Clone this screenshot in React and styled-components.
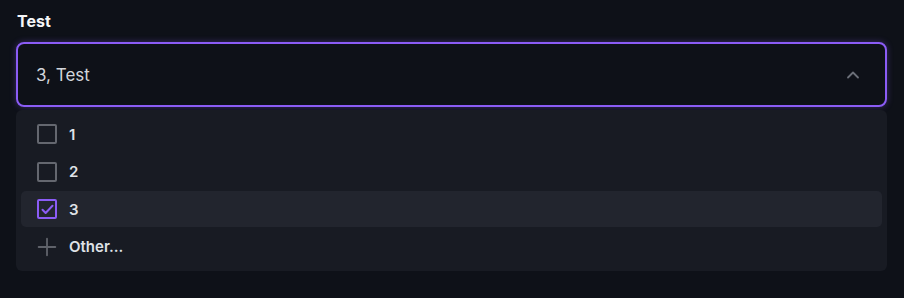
import React from 'react';
import styled, { createGlobalStyle } from 'styled-components';

const GlobalStyle = createGlobalStyle`
  html, body {
    margin: 0;
    background: #0e1118;
    font-family: Inter, "Noto Sans", sans-serif;
  }
`;

const Page = styled.div`
  padding: 10px 17px 0 16px;
  width: 871px;
`;

const Label = styled.div`
  font-size: 16px;
  font-weight: 700;
  color: #f5f6f8;
  line-height: 22px;
  margin-bottom: 10px;
  padding-left: 1px;
`;

const Field = styled.div`
  height: 61px;
  border: 2px solid #8b5cf6;
  border-radius: 8px;
  box-shadow: 0 0 6px rgba(139, 92, 246, 0.35);
  display: flex;
  align-items: center;
  justify-content: space-between;
  padding: 0 22px 0 18px;
  color: #d3d6dc;
  font-size: 17px;
`;

const Menu = styled.div`
  margin-top: 3px;
  background: #181b23;
  border-radius: 6px;
  padding: 6px 5px;
  display: flex;
  flex-direction: column;
  gap: 1.5px;
`;

const Row = styled.div`
  height: 36px;
  display: flex;
  align-items: center;
  gap: 12px;
  padding-left: 16px;
  border-radius: 5px;
  background: ${p => (p.$active ? '#22252e' : 'transparent')};
  color: #dfe1e6;
  font-size: 15px;
  font-weight: 600;
`;

const Box = styled.span`
  width: 16px;
  height: 16px;
  border: 2px solid ${p => (p.$checked ? '#8b5cf6' : '#64676f')};
  border-radius: 2px;
  display: flex;
  align-items: center;
  justify-content: center;
`;

const Chevron = () => (
  <svg width="20" height="20" viewBox="0 0 24 24" fill="none" stroke="#6b6f78" strokeWidth="2.2" strokeLinecap="round" strokeLinejoin="round">
    <path d="M6 15l6-6 6 6" />
  </svg>
);

const Check = () => (
  <svg width="15" height="15" viewBox="0 0 24 24" fill="none" stroke="#8b5cf6" strokeWidth="3.2" strokeLinecap="round" strokeLinejoin="round">
    <path d="M4 12.5l5 5L20 6" />
  </svg>
);

const Plus = () => (
  <svg width="20" height="20" viewBox="0 0 24 24" fill="none" stroke="#5f626a" strokeWidth="2.2" strokeLinecap="round">
    <path d="M12 2v20M2 12h20" />
  </svg>
);

const options = [
  { label: '1', checked: false },
  { label: '2', checked: false },
  { label: '3', checked: true },
];

const App = () => {
  return (
    <Page>
      <GlobalStyle />
      <Label>Test</Label>
      <Field>
        <span>3, Test</span>
        <Chevron />
      </Field>
      <Menu>
        {options.map(o => (
          <Row key={o.label} $active={o.checked}>
            <Box $checked={o.checked}>{o.checked && <Check />}</Box>
            {o.label}
          </Row>
        ))}
        <Row>
          <Plus />
          Other...
        </Row>
      </Menu>
    </Page>
  );
};

export default App;
